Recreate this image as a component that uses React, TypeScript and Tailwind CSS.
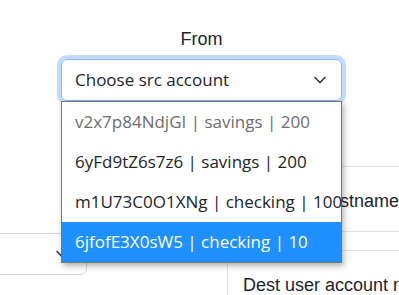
const OPTIONS = [
  { label: "v2x7p84NdjGI | savings | 200", disabled: true },
  { label: "6yFd9tZ6s7z6 | savings | 200" },
  { label: "m1U73C0O1XNg | checking | 100" },
  { label: "6jfofE3X0sW5 | checking | 10", active: true },
];

function Chevron({ className }: { className?: string }) {
  return (
    <svg className={className} width="12" height="8" viewBox="0 0 12 8" fill="none">
      <path d="M1 1.5 L6 6.5 L11 1.5" stroke="#343a40" strokeWidth="1.6" strokeLinecap="round" strokeLinejoin="round" />
    </svg>
  );
}

export default function App() {
  return (
    <div className="relative w-[399px] h-[295px] overflow-hidden bg-white text-[#212529] font-['Liberation_Sans',Arial,sans-serif]">
      {/* source account picker */}
      <div className="ml-[61px] w-[281px] pt-[26px] flex flex-col">
        <div className="text-center text-[18px] leading-[27px]">From</div>
        <div className="mt-[6px] h-[42px] flex items-center justify-between rounded-[6px] border border-[#86b7fe] shadow-[0_0_0_4px_rgba(13,110,253,0.25)] pl-[13px] pr-[15px] font-['Open_Sans',sans-serif] text-[17px]">
          <span>Choose src account</span>
          <Chevron />
        </div>
      </div>

      {/* page content behind the open list */}
      <div className="flex">
        <div className="w-[227px] shrink-0">
          <div className="mt-[132px] -ml-[40px] w-[127px] h-[42px] flex items-center justify-end rounded-[6px] border border-[#ced4da] pr-[18px]">
            <Chevron />
          </div>
        </div>
        <div className="flex-1">
          <div className="mt-[65px] h-[66px] border-y border-[#dee2e6] pl-[16px] pt-[21px] text-[18px] leading-[27px] whitespace-nowrap">
            Dest user firstname
          </div>
          <div className="mt-[18px] h-[60px] border-l border-t border-[#dee2e6] pl-[15px] pt-[21px] text-[18px] leading-[27px] whitespace-nowrap">
            Dest user account number
          </div>
        </div>
      </div>

      {/* native select popup */}
      <ul className="absolute left-[61px] top-[101px] w-[281px] border border-[#767676] bg-white shadow-[2px_3px_6px_rgba(0,0,0,0.3)] font-['Open_Sans',sans-serif] text-[17px]">
        {OPTIONS.map((o) => (
          <li
            key={o.label}
            className={
              "h-[40px] flex items-center pl-[13px] whitespace-nowrap " +
              (o.active ? "bg-[#1e90ff] text-white" : o.disabled ? "text-[#6d6d6d]" : "text-[#212529]")
            }
          >
            {o.label}
          </li>
        ))}
      </ul>
    </div>
  );
}
